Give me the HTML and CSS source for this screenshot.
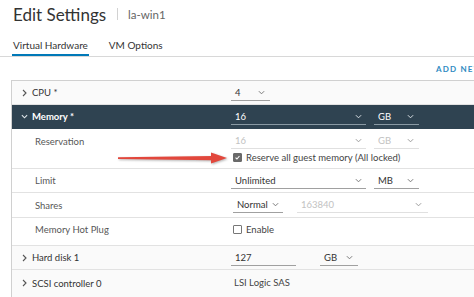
FILE: index.html
```html
<!DOCTYPE html>
<html lang="en">
<head>
<meta charset="utf-8">
<title>Edit Settings | la-win1</title>
<link rel="stylesheet" href="styles.css">
</head>
<body>
<div class="page">
  <header class="title-bar">
    <h1 class="title">Edit Settings</h1>
    <span class="divider"></span>
    <span class="vm-name">la-win1</span>
  </header>

  <nav class="tabs">
    <span class="tab active">Virtual Hardware</span>
    <span class="tab">VM Options</span>
  </nav>

  <div class="toolbar">
    <span class="add-btn">ADD NEW DEVICE</span>
  </div>

  <div class="stack">
    <div class="row head">
      <div class="label"><svg class="chev-r" viewBox="0 0 5 8"><polyline points="1,1 4,4 1,7"/></svg>CPU *</div>
      <div class="value">
        <div class="ctl w-cpu"><span>4</span><svg class="chev-d" viewBox="0 0 8 5"><polyline points="1,1 4,4 7,1"/></svg></div>
      </div>
    </div>

    <div class="row head expanded">
      <div class="label"><svg class="chev-d open" viewBox="0 0 8 5"><polyline points="1,1 4,4 7,1"/></svg>Memory *</div>
      <div class="value gap-8">
        <div class="ctl w-mem"><span>16</span><svg class="chev-d" viewBox="0 0 8 5"><polyline points="1,1 4,4 7,1"/></svg></div>
        <div class="ctl w-unit"><span>GB</span><svg class="chev-d" viewBox="0 0 8 5"><polyline points="1,1 4,4 7,1"/></svg></div>
      </div>
    </div>

    <div class="row sub tall">
      <div class="label">Reservation</div>
      <div class="value-col">
        <div class="value gap-8">
          <div class="ctl w-mem disabled"><span>16</span><svg class="chev-d" viewBox="0 0 8 5"><polyline points="1,1 4,4 7,1"/></svg></div>
          <div class="ctl w-unit disabled"><span>GB</span><svg class="chev-d" viewBox="0 0 8 5"><polyline points="1,1 4,4 7,1"/></svg></div>
        </div>
        <label class="check-line"><span class="box checked"><svg viewBox="0 0 9 9"><polyline points="2,4.6 3.8,6.4 7,2.6"/></svg></span>Reserve all guest memory (All locked)</label>
      </div>
    </div>

    <div class="row sub">
      <div class="label">Limit</div>
      <div class="value gap-8">
        <div class="ctl w-mem"><span>Unlimited</span><svg class="chev-d" viewBox="0 0 8 5"><polyline points="1,1 4,4 7,1"/></svg></div>
        <div class="ctl w-unit"><span>MB</span><svg class="chev-d" viewBox="0 0 8 5"><polyline points="1,1 4,4 7,1"/></svg></div>
      </div>
    </div>

    <div class="row sub shares">
      <div class="label">Shares</div>
      <div class="value gap-14 shift-2">
        <div class="ctl w-shares"><span>Normal</span><svg class="chev-d" viewBox="0 0 8 5"><polyline points="1,1 4,4 7,1"/></svg></div>
        <div class="ctl w-sharesval disabled"><span>163840</span><svg class="chev-d" viewBox="0 0 8 5"><polyline points="1,1 4,4 7,1"/></svg></div>
      </div>
    </div>

    <div class="row sub top">
      <div class="label">Memory Hot Plug</div>
      <div class="value">
        <label class="check-line"><span class="box"></span>Enable</label>
      </div>
    </div>

    <div class="row head">
      <div class="label"><svg class="chev-r" viewBox="0 0 5 8"><polyline points="1,1 4,4 1,7"/></svg>Hard disk 1</div>
      <div class="value gap-24">
        <div class="ctl w-disk"><span>127</span></div>
        <div class="ctl w-unit-s"><span>GB</span><svg class="chev-d" viewBox="0 0 8 5"><polyline points="1,1 4,4 7,1"/></svg></div>
      </div>
    </div>

    <div class="row head last">
      <div class="label"><svg class="chev-r" viewBox="0 0 5 8"><polyline points="1,1 4,4 1,7"/></svg>SCSI controller 0</div>
      <div class="value"><span class="plain">LSI Logic SAS</span></div>
    </div>

    <svg class="callout-arrow" viewBox="0 0 110 12" width="110" height="12">
      <polygon points="0,5.2 95,4 95,8.2 0,7"/>
      <polygon points="93,0.5 109,6 93,11.5"/>
    </svg>
  </div>
</div>
</body>
</html>
```

FILE: styles.css
```css
* { box-sizing: border-box; }

html, body {
  margin: 0;
  background: #fff;
}

body {
  width: 474px;
  height: 297px;
  overflow: hidden;
  font-family: Lato, "Open Sans", sans-serif;
  color: #333;
}

.page {
  width: 560px;
}

/* title */
.title-bar {
  display: flex;
  align-items: center;
  height: 28px;
  padding-left: 13px;
}
.title {
  margin: 0;
  font-size: 17px;
  font-weight: 400;
  line-height: 1;
  color: #333;
}
.divider {
  width: 1px;
  height: 12px;
  background: #d2d2d2;
  margin: 0 10px 0 11px;
}
.vm-name {
  font-size: 11.5px;
  color: #666;
}

/* tabs */
.tabs {
  display: flex;
  gap: 19px;
  margin-top: 8px;
  padding-left: 12px;
  border-bottom: 1px solid #d8d8d8;
}
.tab {
  height: 20px;
  line-height: 18px;
  padding: 0 1px;
  font-size: 10px;
  color: #333;
}
.tab.active {
  box-shadow: inset 0 -2px 0 #0079b8;
}

/* toolbar */
.toolbar {
  display: flex;
  align-items: center;
  height: 23px;
  padding-left: 436px;
}
.add-btn {
  font-size: 8px;
  font-weight: 700;
  letter-spacing: 1.2px;
  color: #2f8bc2;
  white-space: nowrap;
}

/* stack view */
.stack {
  position: relative;
  margin-left: 11px;
  border-left: 1px solid #d0d0d0;
  border-top: 1px solid #d0d0d0;
  font-size: 9.5px;
}
.row {
  display: grid;
  grid-template-columns: 219px 1fr;
  align-items: center;
  height: 24px;
  border-bottom: 1px solid #e2e2e2;
  background: #fff;
}
.row.head {
  background: #fafafa;
}
.row.expanded {
  background: #2f4351;
  color: #fff;
  font-weight: 700;
  border-bottom-color: #2f4351;
}
.row.last {
  height: 30px;
  align-items: start;
  padding-top: 5px;
  border-bottom: none;
}
.row.shares {
  height: 25px;
}
.row.tall {
  height: 40px;
  align-items: start;
  padding-top: 4px;
}
.row.top {
  height: 28px;
  align-items: start;
  padding-top: 3px;
}

.label {
  display: flex;
  align-items: center;
  height: 16px;
  padding-left: 9px;
  color: #333;
}
.row.expanded .label { color: #fff; }
.row.sub .label {
  padding-left: 23px;
  color: #575757;
}

.chev-r {
  width: 5px;
  height: 8px;
  margin-right: 5px;
  margin-left: 1px;
  fill: none;
  stroke: #555;
  stroke-width: 1.1;
}
.chev-d {
  width: 7px;
  height: 5px;
  flex: none;
  fill: none;
  stroke: #777;
  stroke-width: 1.1;
}
.chev-d.open {
  width: 7px;
  margin-right: 4px;
  stroke: #fff;
  stroke-width: 1.3;
}

.value {
  display: flex;
  align-items: center;
}
.value-col {
  display: flex;
  flex-direction: column;
}
.gap-8 { gap: 8px; }
.gap-14 { gap: 14px; }
.gap-24 { gap: 24px; }
.shift-2 { padding-left: 2px; }

.ctl {
  display: flex;
  align-items: center;
  justify-content: space-between;
  height: 16px;
  padding: 0 4px 0 4px;
  border-bottom: 1px solid #a0a0a0;
  color: #333;
  font-weight: 400;
}
.row.expanded .ctl {
  color: #fff;
  border-bottom-color: #8a9aa4;
}
.row.expanded .chev-d { stroke: #dfe5e9; }
.ctl.disabled {
  color: #c2c2c2;
  border-bottom-color: #e0e0e0;
}
.ctl.disabled .chev-d { stroke: #999; }

.w-cpu { width: 39px; padding-right: 5px; }
.w-mem { width: 135px; }
.w-unit { width: 45px; padding-right: 5px; }
.w-shares { width: 50px; padding-right: 4px; }
.w-sharesval { width: 131px; padding-right: 6px; }
.w-disk { width: 65px; }
.w-unit-s { width: 38px; padding-right: 5px; }

.plain {
  padding-left: 3px;
  line-height: 16px;
  color: #444;
}

.check-line {
  display: flex;
  align-items: center;
  gap: 4px;
  height: 16px;
  padding-left: 2px;
  color: #444;
}
.box {
  display: inline-flex;
  width: 9px;
  height: 9px;
  border: 1px solid #777;
  border-radius: 1px;
  background: #fff;
}
.box.checked {
  background: #6a6a6a;
  border-color: #6a6a6a;
}
.box svg {
  width: 7px;
  height: 7px;
  fill: none;
  stroke: #fff;
  stroke-width: 1.4;
}

.callout-arrow {
  position: absolute;
  left: 106px;
  top: 71px;
  fill: #e2473c;
  filter: drop-shadow(1px 1.5px 1px rgba(0, 0, 0, 0.3));
}
```
